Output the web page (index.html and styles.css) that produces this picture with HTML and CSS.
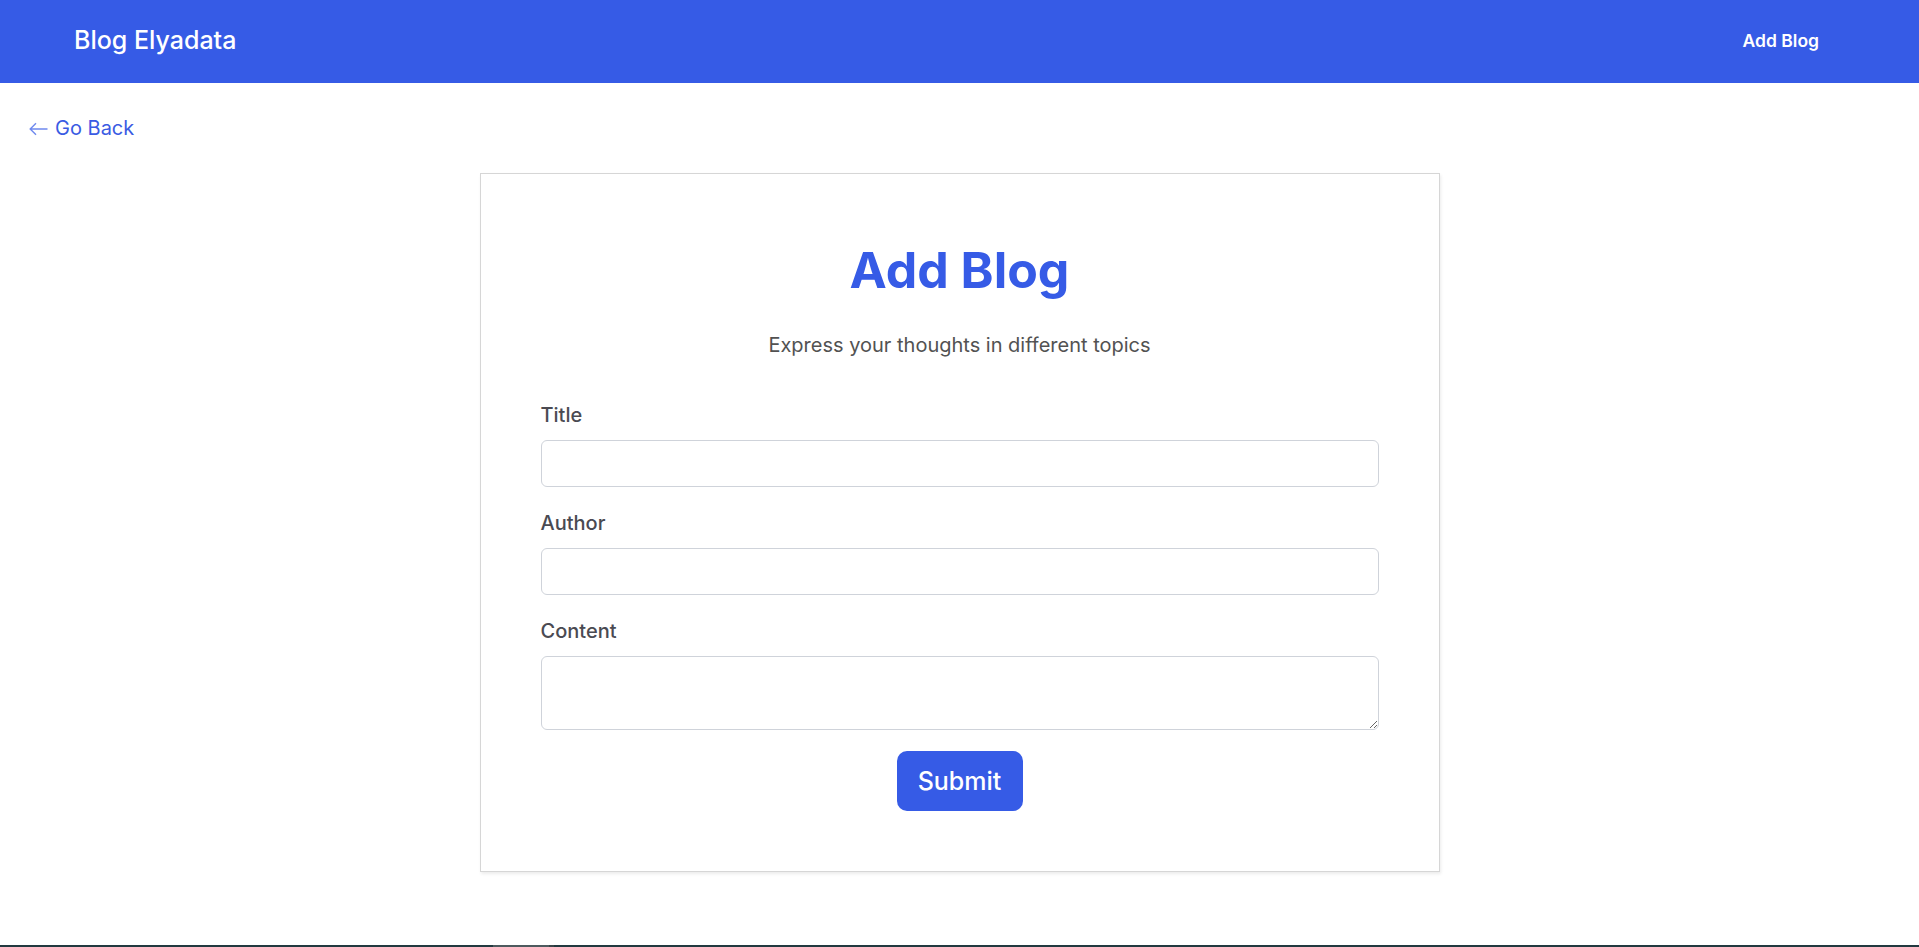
FILE: index.html
```html
<!DOCTYPE html>
<html lang="en">
<head>
<meta charset="utf-8">
<title>Blog Elyadata - Add Blog</title>
<link rel="stylesheet" href="styles.css">
</head>
<body>
<div class="page">
  <header class="navbar">
    <a class="brand" href="#">Blog Elyadata</a>
    <a class="nav-link" href="#">Add Blog</a>
  </header>
  <main class="main">
    <a class="back" href="#"><svg class="arrow" width="19" height="14" viewBox="0 0 19 14" aria-hidden="true"><path d="M18.5 7H1.2M7 1.2L1.2 7L7 12.8" fill="none" stroke="currentColor" stroke-width="1.4"/></svg><span>Go Back</span></a>
    <section class="card">
      <h1 class="card-title">Add Blog</h1>
      <p class="card-sub">Express your thoughts in different topics</p>
      <form class="form">
        <label class="label" for="title">Title</label>
        <input class="field" id="title" type="text">
        <label class="label" for="author">Author</label>
        <input class="field" id="author" type="text">
        <label class="label" for="content">Content</label>
        <textarea class="field area" id="content"></textarea>
        <div class="actions">
          <button class="submit" type="button">Submit</button>
        </div>
      </form>
    </section>
  </main>
  <div class="bottom-bar"><span class="bar-seg"></span><span class="bar-seg2"></span></div>
</div>
</body>
</html>
```

FILE: styles.css
```css
* { box-sizing: border-box; }
html, body { margin: 0; padding: 0; }
body {
  font-family: Inter, "Noto Sans", "Liberation Sans", sans-serif;
  background: #ffffff;
  color: #333;
}
.page {
  height: 100vh;
  display: flex;
  flex-direction: column;
  overflow: hidden;
}
.navbar {
  flex: none;
  height: 83px;
  background: #365be6;
  display: flex;
  align-items: center;
  justify-content: space-between;
  padding: 0 100px 3px 74px;
}
.brand {
  color: #ffffff;
  text-decoration: none;
  font-size: 25px;
  font-weight: 500;
}
.nav-link {
  color: #ffffff;
  text-decoration: none;
  font-size: 17.5px;
  font-weight: 600;
}
.main {
  flex: 1;
  display: flex;
  flex-direction: column;
  padding-top: 30px;
}
.back {
  align-self: flex-start;
  margin-left: 29px;
  display: flex;
  align-items: center;
  gap: 7px;
  color: #3a5be3;
  text-decoration: none;
  font-size: 20px;
  line-height: 30px;
  font-weight: 400;
}
.arrow {
  color: #6f89ee;
  display: block;
  margin-top: 1px;
}
.card {
  width: 960px;
  margin: 30px auto 0;
  border: 1px solid #d6d6d6;
  box-shadow: 1px 2px 3px rgba(0,0,0,0.08);
  padding: 60px;
  background: #fff;
}
.card-title {
  margin: 6px 0 0;
  text-align: center;
  color: #365be6;
  font-size: 50px;
  line-height: 60px;
  font-weight: 700;
}
.card-sub {
  margin: 30px 0 0;
  text-align: center;
  color: #525252;
  font-size: 20px;
  line-height: 30px;
}
.form {
  display: flex;
  flex-direction: column;
  margin-top: 40px;
}
.label {
  font-size: 20px;
  line-height: 30px;
  font-weight: 500;
  color: #4a4a52;
  margin-bottom: 10px;
}
.field {
  height: 47px;
  border: 1px solid #cfd3da;
  border-radius: 6px;
  margin: 0 0 21px;
  padding: 8px 12px;
  font: inherit;
  font-size: 20px;
}
.area {
  height: 74px;
  resize: vertical;
}
.actions {
  display: flex;
  justify-content: center;
}
.submit {
  width: 126px;
  height: 60px;
  border: none;
  border-radius: 10px;
  background: #365be6;
  color: #fff;
  font-family: inherit;
  font-size: 25px;
  font-weight: 500;
  cursor: pointer;
}
.bottom-bar {
  flex: none;
  height: 2px;
  background: #22393f;
  display: flex;
}
.bar-seg {
  width: 56px;
  margin-left: 493px;
  background: #4d5a5e;
}
.bar-seg2 {
  width: 5px;
  background: #3a4548;
}
```
